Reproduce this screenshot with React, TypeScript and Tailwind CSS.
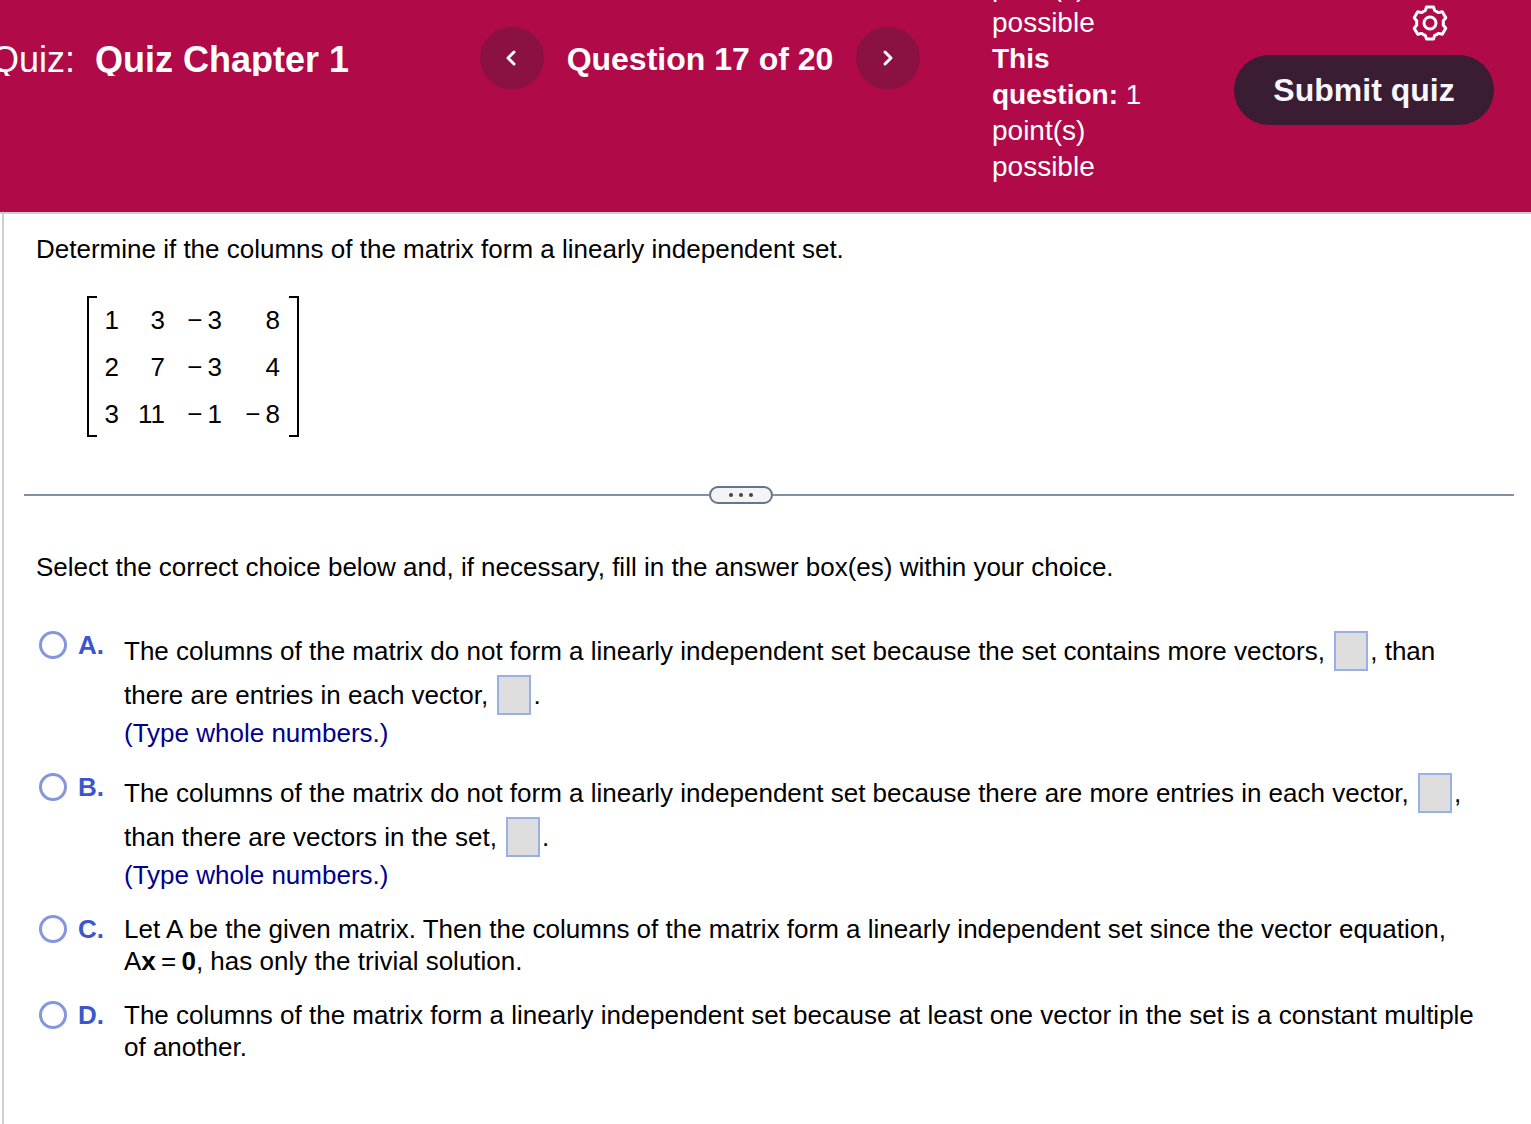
import { useState, type ReactNode } from "react";

const MATRIX = [
  ["1", "3", "−\u20093", "8"],
  ["2", "7", "−\u20093", "4"],
  ["3", "11", "−\u20091", "−\u20098"],
];

interface ChoiceProps {
  letter: string;
  selected: string;
  onSelect: (letter: string) => void;
  children: ReactNode;
}

function Choice({ letter, selected, onSelect, children }: ChoiceProps) {
  const id = `choice-${letter}`;

  return (
    <div className="flex items-start">
      <input
        id={id}
        type="radio"
        name="choice"
        checked={selected === letter}
        onChange={() => onSelect(letter)}
        className="mt-[2px] mr-[11px] size-7 shrink-0 appearance-none rounded-full border-3 border-[#8496de] bg-white checked:bg-[#3d56cc]"
      />
      <label htmlFor={id} className="w-[46px] shrink-0 font-bold text-[#3b57cc]">
        {letter}.
      </label>
      <div className="min-w-0 flex-1">{children}</div>
    </div>
  );
}

function AnswerBox({ label }: { label: string }) {
  return (
    <input
      type="text"
      aria-label={label}
      className="mx-[2px] my-[2px] h-10 w-[34px] border-2 border-[#97b0e8] bg-[#dedede] text-center align-baseline"
    />
  );
}

function Hint() {
  return <p className="text-[#00008b]">(Type whole numbers.)</p>;
}

function NavButton({ label, path }: { label: string; path: string }) {
  return (
    <button
      type="button"
      aria-label={label}
      className="flex h-[62px] w-16 shrink-0 items-center justify-center rounded-full bg-[#8a1142]"
    >
      <svg width="12" height="18" viewBox="0 0 12 18" fill="none" stroke="white" strokeWidth="3" strokeLinecap="round" strokeLinejoin="round">
        <path d={path} />
      </svg>
    </button>
  );
}

function Header() {
  return (
    <header className="flex h-[214px] items-start overflow-hidden border-b-2 border-[#c9cedb] bg-[#b00a49] text-white">
      <h1 className="-ml-[9px] mt-10 h-9 w-[489px] shrink-0 overflow-hidden text-4xl leading-10 whitespace-pre">
        Quiz:  <strong>Quiz Chapter 1</strong>
      </h1>

      <nav aria-label="Questions" className="mt-[27px] flex w-[440px] shrink-0 items-center justify-between">
        <NavButton label="Previous question" path="M8 3 2 9l6 6" />
        <span className="pt-[2px] text-[32px] font-bold">Question 17 of 20</span>
        <NavButton label="Next question" path="m3 3 6 6-6 6" />
      </nav>

      <div className="ml-[72px] flex h-[212px] w-40 shrink-0 flex-col justify-end pb-[27px] text-[28px] leading-9">
        <p>point(s) possible</p>
        <p>
          <strong>This question:</strong> 1 point(s) possible
        </p>
      </div>

      <div className="mt-1 mr-[37px] ml-auto flex flex-col items-end">
        <button type="button" aria-label="Settings" className="mr-[45px] mb-[13px]">
          <svg width="38" height="38" viewBox="0 0 38 38" fill="none" stroke="white" strokeWidth="3" strokeLinejoin="round">
            <circle cx="19" cy="19" r="6" />
            <path d="M15.500 3H22.500L23.700 6.600Q25.700 7.200 27.300 8.600L31.300 7.800L34.800 13.800L32.200 17Q32.600 19 32.200 21L34.800 24.200L31.300 30.200L27.300 29.400Q25.700 30.800 23.700 31.400L22.500 35H15.500L14.300 31.400Q12.300 30.800 10.700 29.400L6.700 30.200L3.200 24.200L5.800 21Q5.400 19 5.800 17L3.200 13.800L6.700 7.800L10.700 8.600Q12.300 7.200 14.300 6.600Z" />
          </svg>
        </button>
        <button type="button" className="h-[70px] w-[260px] rounded-full bg-[#3a1d33] text-[32px] font-bold text-[#f6f7ff]">
          Submit quiz
        </button>
      </div>
    </header>
  );
}

function Matrix() {
  return (
    <div className="mt-[31px] ml-[51px] flex w-[212px]">
      <div className="w-[10px] border-2 border-r-0 border-black" />
      <table className="flex-1">
        <tbody>
          {MATRIX.map((row, i) => (
            <tr key={i} className="h-[47px] text-right">
              <td className="w-[22px]">{row[0]}</td>
              <td className="w-[46px]">{row[1]}</td>
              <td className="w-[57px]">{row[2]}</td>
              <td className="w-[58px]">{row[3]}</td>
              <td />
            </tr>
          ))}
        </tbody>
      </table>
      <div className="w-[10px] border-2 border-l-0 border-black" />
    </div>
  );
}

function Divider() {
  return (
    <div className="mt-[49px] mr-[17px] ml-5 flex items-center">
      <div className="h-[2px] flex-[685] bg-[#8391a3]" />
      <button
        type="button"
        aria-label="Resize panels"
        className="flex h-[18px] w-16 items-center justify-center gap-[6px] rounded-full border-2 border-[#64748a] bg-[#f3f4f5]"
      >
        <span className="size-1 rounded-full bg-[#444]" />
        <span className="size-1 rounded-full bg-[#444]" />
        <span className="size-1 rounded-full bg-[#444]" />
      </button>
      <div className="h-[2px] flex-[741] bg-[#8391a3]" />
    </div>
  );
}

export default function App() {
  const [selected, setSelected] = useState("");
  const choice = { selected, onSelect: setSelected };

  return (
    <div className="flex min-h-screen flex-col bg-white font-['Liberation_Sans',Arial,sans-serif]">
      <Header />
      <main className="ml-[2px] flex-1 border-l-2 border-[#c9cedb] pt-[19px] text-[26px] leading-8 text-black">
        <section className="pl-8">
          <p>Determine if the columns of the matrix form a linearly independent set.</p>
          <Matrix />
        </section>

        <Divider />

        <section className="mt-[47px] pr-10 pl-8">
          <p>Select the correct choice below and, if necessary, fill in the answer box(es) within your choice.</p>
          <div className="mt-[46px] ml-[3px] flex flex-col gap-[22px]">
            <Choice letter="A" {...choice}>
              <p>
                The columns of the matrix do not form a linearly independent set because the set contains more vectors,{" "}
                <span className="whitespace-nowrap"><AnswerBox label="Number of vectors" />,</span> than there are entries in each vector,{" "}
                <span className="whitespace-nowrap"><AnswerBox label="Number of entries" />.</span>
              </p>
              <Hint />
            </Choice>
            <Choice letter="B" {...choice}>
              <p>
                The columns of the matrix do not form a linearly independent set because there are more entries in each vector,{" "}
                <span className="whitespace-nowrap"><AnswerBox label="Number of entries" />,</span> than there are vectors in the set,{" "}
                <span className="whitespace-nowrap"><AnswerBox label="Number of vectors" />.</span>
              </p>
              <Hint />
            </Choice>
            <Choice letter="C" {...choice}>
              <p>
                Let A be the given matrix. Then the columns of the matrix form a linearly independent set since the vector equation,{" "}
                <span className="whitespace-nowrap">A<b>x</b>{"\u2009=\u2009"}<b>0</b>,</span> has only the trivial solution.
              </p>
            </Choice>
            <Choice letter="D" {...choice}>
              <p>
                The columns of the matrix form a linearly independent set because at least one vector in the set is a constant multiple of another.
              </p>
            </Choice>
          </div>
        </section>
      </main>
    </div>
  );
}
